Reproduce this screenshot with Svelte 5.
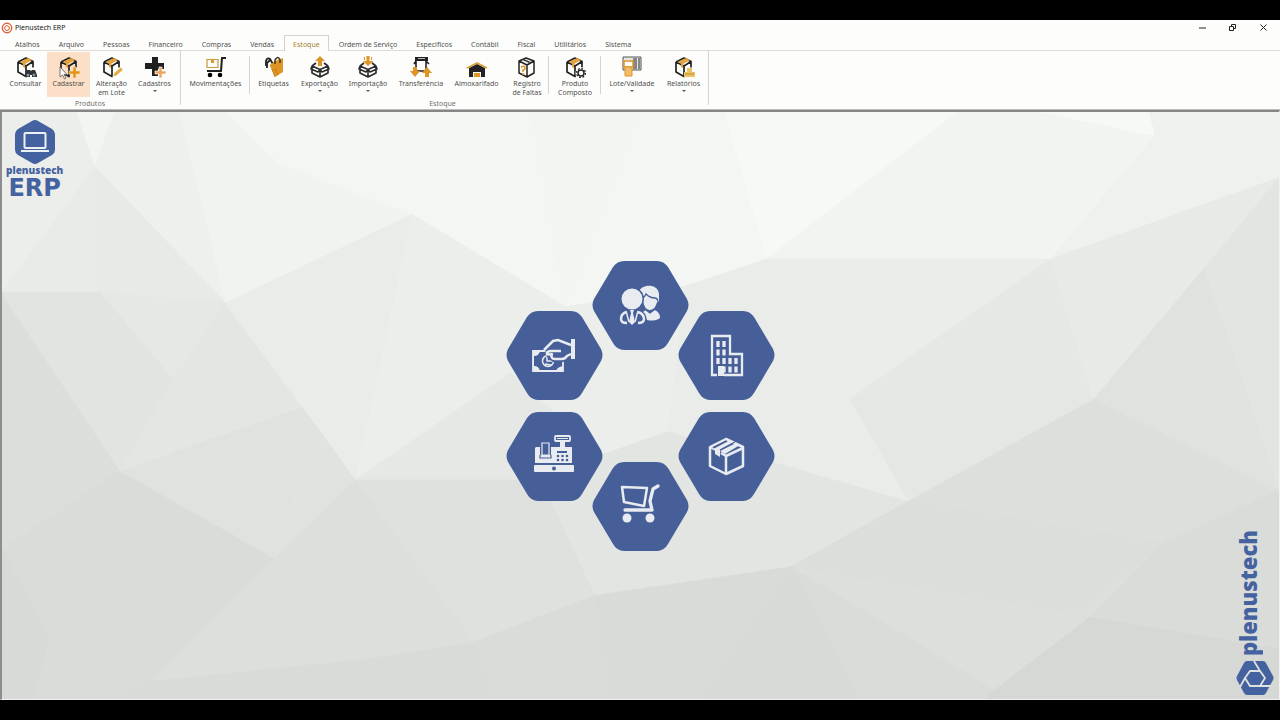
<script>
  const tabs = ['Atalhos', 'Arquivo', 'Pessoas', 'Financeiro', 'Compras', 'Vendas', 'Estoque', 'Ordem de Serviço', 'Específicos', 'Contábil', 'Fiscal', 'Utilitários', 'Sistema'];
  let active = $state('Estoque');

  const products = [
    { icon: 'search', lines: ['Consultar'] },
    { icon: 'add', lines: ['Cadastrar'], hot: true },
    { icon: 'edit', lines: ['Alteração', 'em Lote'] },
    { icon: 'plus', lines: ['Cadastros'], menu: true }
  ];
  const stock = [
    { icon: 'trolley', lines: ['Movimentações'], sep: true },
    { icon: 'tags', lines: ['Etiquetas'] },
    { icon: 'export', lines: ['Exportação'], menu: true },
    { icon: 'import', lines: ['Importação'], menu: true },
    { icon: 'transfer', lines: ['Transferência'] },
    { icon: 'warehouse', lines: ['Almoxarifado'] },
    { icon: 'missing', lines: ['Registro', 'de Faltas'], sep: true },
    { icon: 'gear', lines: ['Produto', 'Composto'], sep: true },
    { icon: 'barcode', lines: ['Lote/Validade'], menu: true },
    { icon: 'report', lines: ['Relatórios'], menu: true }
  ];
  const wheel = [
    { name: 'left', items: [['money', 'Financeiro'], ['register', 'Caixa']] },
    { name: 'middle', items: [['people', 'Pessoas'], ['cart', 'Compras']] },
    { name: 'right', items: [['building', 'Empresa'], ['box', 'Produtos']] }
  ];
  const facets = [
    ['0,0 75,0 93,55 98,181 0,181', '#ebeeeb'],
    ['93,55 98,181 0,181', '#e9ebe9'],
    ['75,0 113,0 93,55', '#f3f5f3'],
    ['113,0 178,0 224,192 93,55', '#eef0ee'],
    ['178,0 225,0 276,51 411,103 224,192', '#f1f3f1'],
    ['225,0 285,0 276,51', '#f4f6f4'],
    ['285,0 530,0 525,9 411,103 276,51', '#f4f6f3'],
    ['530,0 724,0 766,148 685,175 565,196 411,103', '#f4f6f3'],
    ['530,0 640,0 565,196', '#f3f5f2'],
    ['93,55 224,192 98,181', '#e8eae8'],
    ['98,181 224,192 301,297 118,361', '#e4e6e4'],
    ['98,181 224,192 171,268', '#e6e8e6'],
    ['0,181 98,181 171,268 118,361 4,190', '#e2e4e2'],
    ['0,181 4,190 118,361 0,440', '#dcdedc'],
    ['224,192 411,103 354,370', '#eaecea'],
    ['411,103 565,196 600,345 354,370', '#ebeeeb'],
    ['565,196 685,175 668,321 600,345 510,262', '#ebeeeb'],
    ['354,370 510,262 600,345 540,370', '#e6e8e6'],
    ['600,345 668,321 909,391 791,457 594,486 540,370', '#e3e5e2'],
    ['118,361 301,297 354,370 273,449', '#e0e2e0'],
    ['301,297 354,370 290,400', '#e1e3e1'],
    ['0,440 118,361 60,590 0,590', '#dadcd9'],
    ['118,361 273,449 151,572 110,590 60,590', '#dadcda'],
    ['0,440 48,530 30,590 0,590', '#d8dad7'],
    ['273,449 354,370 365,550 151,572', '#dddfdd'],
    ['354,370 540,370 594,486 473,533', '#dfe1df'],
    ['354,370 473,533 365,550', '#dddfdc'],
    ['151,572 365,550 473,533 594,486 791,457 900,590 110,590', '#d9dbd8'],
    ['473,533 594,486 610,590 490,590', '#dadcd9'],
    ['724,0 958,0 766,148', '#f7f9f6'],
    ['958,0 1150,0 1156,24 1051,148 766,148', '#f2f4f1'],
    ['1040,0 1150,0 1156,24', '#f7f9f7'],
    ['1150,0 1280,0 1280,66 1051,148 1156,24', '#eff1ee'],
    ['685,175 766,148 850,288 909,391 668,321', '#eaecea'],
    ['766,148 1051,148 850,288', '#ebedea'],
    ['1051,148 1094,289 850,288', '#e6e8e6'],
    ['850,288 1094,289 909,391', '#e5e7e4'],
    ['1051,148 1280,66 1205,157 1094,289', '#e8eae8'],
    ['1205,157 1280,66 1280,380', '#e3e5e3'],
    ['1205,157 1280,380 1094,289', '#e0e2e0'],
    ['791,457 909,391 1094,289 1164,433 1090,508 995,581', '#dddfdc'],
    ['909,391 1164,433 1080,505 791,457', '#dcdedb'],
    ['1094,289 1280,380 1164,433', '#dddfdd'],
    ['1164,433 1280,380 1280,590 1090,508', '#dadcd9'],
    ['791,457 995,581 1000,590 860,590', '#dadcd9'],
    ['791,457 860,590 700,590', '#d8dad7'],
    ['1090,508 1280,540 1280,590 985,590 995,581', '#d6d8d5']
  ];
</script>

{#snippet carton()}
  <path d="M3 6 11 2l7 3.500M3 6v10l8 4.500V10M3 6l8 4 7-4.500v6" fill="none" stroke="#222" stroke-width="1.700" stroke-linejoin="round" />
  <path d="m5 6 8-4 4 2-7 4v4l-2-1V7.500Z" fill="#e5a23a" />
{/snippet}

{#snippet openCarton()}
  <path d="M3 10v7l8 4 8-4v-7M11 13v8M3 10l8 3.500 8-3.500M3 10l4-3M19 10l-4-3M3 10l-1 3 7 3 2-2.500 2 2.500 7-3-1-3" fill="none" stroke="#2b2b2b" stroke-width="1.600" stroke-linejoin="round" />
{/snippet}

{#snippet toolIcon(name)}
  <svg class="tool-icon" viewBox="0 0 22 22" aria-hidden="true">
    {#if name === 'search'}
      {@render carton()}
      <path d="M12 14h3l1 1 1-1h3l2 5v2h-5v-2h-2v2h-5v-2Z" fill="#2d3338" />
      <circle cx="13" cy="19" r="1.500" fill="#8b9298" /><circle cx="19" cy="19" r="1.500" fill="#8b9298" />
    {:else if name === 'add'}
      {@render carton()}
      <path d="M15 11h3v4h4v3h-4v4h-3v-4h-4v-3h4Z" fill="#e29512" stroke="#fbe0c6" stroke-width=".6" />
    {:else if name === 'edit'}
      {@render carton()}
      <path d="m12 21 1-4 7-6 2 3-7 6Z" fill="#e6a93f" stroke="#fdfefb" stroke-width=".7" />
    {:else if name === 'plus'}
      <path d="M8 1h6v6h6v6h-6v7H8v-7H1V7h7Z" fill="#1f1f1f" />
      <path d="M15 11h3v4h4v3h-4v4h-3v-4h-4v-3h4Z" fill="#eda45e" stroke="#fdfefb" stroke-width=".7" />
    {:else if name === 'trolley'}
      <path d="M2 3.500h11v8H2Z" fill="#fdfefb" stroke="#c89a3c" stroke-width="1.200" />
      <path d="M6 3h3v4H6Z" fill="#e0982a" />
      <path d="M21 2h-4l-1 13H2" fill="none" stroke="#1f1f1f" stroke-width="2" />
      <circle cx="5" cy="19" r="2.300" /><circle cx="15" cy="19" r="2.300" />
    {:else if name === 'tags'}
      <path d="M3 10V5q1-4 4-2l4 7M4 12V7l3-3" fill="none" stroke="#222" stroke-width="1.800" />
      <path d="m7 9 5-4 8-3v14l-8 5-5-11Z" fill="#df9423" />
      <path d="M12 8V4q3-5 5 0v3" fill="none" stroke="#3a3328" stroke-width="1.500" />
      <path d="m9 13 3 8M12 12l3 7" stroke="#b66f12" stroke-width=".7" />
    {:else if name === 'export'}
      {@render openCarton()}
      <path d="m11 0 5 5h-3v5H9V5H6Z" fill="#df9423" />
    {:else if name === 'import'}
      {@render openCarton()}
      <path d="M9.500 0h3v5h4L11 10 6 5h3.500ZM7 1h1v3H7ZM14 1h1v3h-1Z" fill="#df9423" />
    {:else if name === 'transfer'}
      <path d="M6 5v10h10V5M6 5 4 8M16 5l3 3" fill="none" stroke="#222" stroke-width="1.600" />
      <path d="M5 1h13v4H5Z" fill="#222" />
      <path d="M8 2h7v1H8Z" fill="#bbb" />
      <path d="M3 11h4v4h3l-5 6-5-6h3ZM15 21v-4h-3l5-6 5 6h-3v4Z" fill="#df9423" />
    {:else if name === 'warehouse'}
      <path d="m3 12 8-4 8 4v9H3Z" fill="#222" />
      <path d="m1 12 10-5 10 5" fill="none" stroke="#d9a03a" stroke-width="1.700" />
      <path d="M7 16h8v5H7Z" fill="#f8f8f6" /><path d="M8 17h6v4H8Z" fill="#df9423" />
    {:else if name === 'missing'}
      <path d="m3 5 7-3 8 3v12l-7 4-8-4ZM3 5l8 4 7-4M11 9v12" fill="none" stroke="#222" stroke-width="1.500" stroke-linejoin="round" />
      <path d="m6 4 7 3 2-1-7-3Z" fill="#444" />
      <path d="M5 11q4-2 4 1 0 2-2 2v2M7 17v2" fill="none" stroke="#df9423" stroke-width="1.500" />
    {:else if name === 'gear'}
      {@render carton()}
      <circle cx="17" cy="17" r="5.500" fill="#fdfefb" />
      <circle cx="17" cy="17" r="3" fill="none" stroke="#222" stroke-width="1.500" />
      <circle cx="17" cy="17" r="4.500" fill="none" stroke="#222" stroke-width="1.200" stroke-dasharray="1.800 1.700" />
    {:else if name === 'barcode'}
      <path d="M2 1h18v13H2Z" fill="#e8e8e8" stroke="#555" />
      <path d="M13 2v11M15 2v11M18 2v11" stroke="#444" stroke-width="1.200" />
      <path d="M3 5h9v6H3Z" fill="#fff" stroke="#df9423" stroke-width="1.500" />
      <path d="M4 11h7v9H4Z" fill="#f2bd69" stroke="#df9423" />
    {:else if name === 'report'}
      {@render carton()}
      <path d="M14 12h5v4h3v5H11v-5h3Z" fill="#e8c264" />
      <path d="M12 18h9" stroke="#c3922d" />
    {/if}
  </svg>
{/snippet}

{#snippet ribbonGroup(title, items, kind)}
  <section class="group {kind}" aria-label={title}>
    <div class="tools">
      {#each items as t}
        <button class="tool" class:hot={t.hot} class:sep={t.sep}>
          {@render toolIcon(t.icon)}
          <span class="label">{#each t.lines as line}<span>{line}</span>{/each}</span>
          {#if t.menu}<i class="caret"></i>{/if}
          {#if t.hot}
            <svg class="cursor" viewBox="0 0 9 14" aria-hidden="true">
              <path d="M1 1v10l2.500-2 2 4 1.500-1-2-3.500H8Z" fill="#fff" stroke="#555" stroke-width=".8" />
            </svg>
          {/if}
        </button>
      {/each}
    </div>
    <p>{title}</p>
  </section>
{/snippet}

{#snippet wheelIcon(name)}
  <svg class="hex-art" viewBox="0 0 97 89" aria-hidden="true">
    <path class="tile" d="M32 0H65Q72 0 76 6L95 38Q98 44 95 50L76 82Q72 89 65 89H32Q25 89 21 82L2 50Q-1 44 2 38L21 6Q25 0 32 0Z" />
    {#if name === 'people'}
      <path class="fill" d="M47 31c2-8 19-9 20 2v7l-2 1c-1 5-4 8-7 8-4 0-6-4-7-9Z" />
      <path class="cut" stroke-width="1.300" d="M50 37q3-1 4-4 4 4 9 4 2 0 3 3" />
      <path class="fill" d="m54 49 4 3 4-3c4 1 6 4 6 8-4 3-9 3-13 2-1-5-2-7-4-8Z" />
      <path class="cut" stroke-width="1.300" d="m54 49 4 3 4-3" />
      <circle class="tile" cx="40" cy="38" r="12" />
      <circle class="fill" cx="40" cy="38" r="10.500" />
      <path class="line" stroke-width="2.500" d="M34 51q-5 2-5 7 0 4 6 4M46 51q6 2 6 7 0 4-6 4" />
      <path class="line" stroke-width="1.500" d="m34 50 3 11M46 50l-3 11" />
      <path class="fill" d="M38 49h4l-1 3 2 9-3 3-3-3 2-9Z" />
    {:else if name === 'money'}
      <path class="line" stroke-width="1.800" d="M27 40h30v20H27Z" />
      <path class="fill" d="M27 40h7q-1 5-6 5v10q5 0 6 5h-7ZM57 60h-7q1-4 7-5Z" />
      <circle class="line" stroke-width="1.500" cx="42" cy="50" r="5.500" />
      <path class="line" stroke-width="1.500" d="M41 45v5h7M39 53l6 1" />
      <path class="tile" d="m39 39 12-11 14 5v13l-8 5H47l-6-5Z" />
      <path class="line" stroke-width="2.500" d="m38 39 9-9 5-1 13 5M55 40H44q-4 1-3 3l6 1M46 42q-2 6 3 6h7q3 0 5-3l4-2" />
      <path class="fill" d="M65 28h4v20h-4Z" />
    {:else if name === 'building'}
      <path class="line" stroke-width="2.300" d="M39 64h-5V25h18v18h12v21H46" />
      <path class="line" stroke-width="3.300" stroke-dasharray="6 2.500" d="M40 30v24M46 30v32" />
      <path class="line" stroke-width="3.300" stroke-dasharray="6 2.500" d="M52 47v15M58 47v15" />
      <path class="fill" d="M40 55h6v10h-6Z" />
    {:else if name === 'register'}
      <rect class="fill" x="28" y="53" width="40" height="7" rx="1" />
      <path class="fill" d="M30 35h36v16H29V36Z" />
      <rect class="line" x="49" y="24" width="15" height="5" rx="1" stroke-width="1.800" />
      <path class="fill" d="M51 26h11v1H51ZM54 29h5v7h-5Z" />
      <path class="tile" d="M34 29h11v14H34Z" />
      <path class="line" stroke-width="1.200" d="M36 31h7v12h-7Z" />
      <path class="tile" d="M51 39h10v2H51Z" />
      <g class="tile"><circle cx="52" cy="44" r="1.300" /><circle cx="56.500" cy="44" r="1.300" /><circle cx="61" cy="44" r="1.300" /><circle cx="52" cy="48" r="1.300" /><circle cx="56.500" cy="48" r="1.300" /><circle cx="61" cy="48" r="1.300" /><circle cx="48" cy="56.500" r="2" /></g>
      <path class="cut" d="M34 43v3h11v-3" stroke-width="1.200" />
    {:else if name === 'cart'}
      <path class="line" stroke-width="2.500" stroke-linejoin="round" d="m30 25 25 1-3 18-20-4Z" />
      <path class="line" stroke-width="3.300" stroke-linecap="round" stroke-linejoin="round" d="m66 24-5 3-3 12 2 9H33" />
      <circle class="fill" cx="35" cy="56" r="4.500" /><circle class="fill" cx="58" cy="56" r="4.500" />
    {:else if name === 'box'}
      <path class="line" stroke-width="2.500" stroke-linejoin="round" d="m48 27 17 8v19l-17 8-16-8V35ZM32 35l6 3M43 41l5 3 17-8M48 44v18" />
      <path class="fill" d="m37 36 15-8 4 2-14 8v7l-5-3ZM42 39l16-8 4 2-15 9Z" />
      <path class="cut" d="m42 38 15-8M35 36l14-7" stroke-width="1.200" />
    {/if}
  </svg>
{/snippet}

<div class="screen">
  <header>
    <div class="titlebar">
      <svg class="brand" viewBox="0 0 12 12" aria-hidden="true">
        <circle cx="6" cy="6" r="4.700" fill="none" stroke="#d8603a" stroke-width="1.400" />
        <path d="M6 3.500 8.200 5v2.500L6 8.700 3.800 7.500V5Z" fill="none" stroke="#d8603a" />
      </svg>
      <h1>Plenustech ERP</h1>
      <div class="controls">
        <button aria-label="Minimizar"><svg viewBox="0 0 9 9"><path d="M1 5h7" /></svg></button>
        <button aria-label="Restaurar"><svg viewBox="0 0 9 9"><path d="M1.500 3.500h4v4h-4ZM3.500 3V1.500h4v4H6" /></svg></button>
        <button aria-label="Fechar"><svg viewBox="0 0 9 9"><path d="m1.500 1.500 6 6m0-6-6 6" /></svg></button>
      </div>
    </div>
    <nav>
      {#each tabs as tab}
        <button class:active={tab === active} onclick={() => (active = tab)}>{tab}</button>
      {/each}
    </nav>
    <div class="ribbon">
      {@render ribbonGroup('Produtos', products, 'products')}
      {@render ribbonGroup('Estoque', stock, 'stock')}
    </div>
  </header>

  <main>
    <svg class="backdrop" viewBox="0 0 1280 590" preserveAspectRatio="none" aria-hidden="true">
      {#each facets as [points, color]}
        <polygon {points} fill={color} stroke={color} stroke-width=".6" />
      {/each}
    </svg>

    <div class="logo">
      <svg viewBox="0 0 40 44" aria-hidden="true">
        <path d="M17 1q3-2 6 0l14 8q3 2 3 5v16q0 3-3 5l-14 8q-3 2-6 0L3 35q-3-2-3-5V14q0-3 3-5Z" fill="#4562a0" />
        <rect x="9.500" y="13" width="21" height="15" rx="1" fill="none" stroke="#eef1f2" stroke-width="2" />
        <path d="M6 30h28v2H6Z" fill="#eef1f2" />
      </svg>
      <span class="name">plenustech</span>
      <strong>ERP</strong>
    </div>

    <div class="wheel">
      {#each wheel as column}
        <div class="column {column.name}">
          {#each column.items as [icon, label]}
            <button class="hex" aria-label={label}>{@render wheelIcon(icon)}</button>
          {/each}
        </div>
      {/each}
    </div>

    <div class="signature">
      <span>plenustech</span>
      <svg viewBox="0 0 38 34" aria-hidden="true">
        <path d="M11 0h16q2 0 3 2l7 13q1 2 0 4l-7 13q-1 2-3 2H11q-2 0-3-2L1 19q-1-2 0-4L8 2q1-2 3-2Z" fill="#4562a0" />
        <path d="M14 10h10l5 7-5 8H14l-5-8ZM18 0l6 10M29 17l-5 8h11M9 17 4 26" fill="none" stroke="#dfe2e0" stroke-width="1.800" />
      </svg>
    </div>
  </main>
</div>

<style>
  :global(body) { margin: 0; background: #000; }
  .screen {
    box-sizing: border-box;
    min-height: 100vh;
    padding: 20px 0;
    display: flex;
    flex-direction: column;
    background: #000;
    color: #505050;
    font: 7px/9px "Noto Sans", "Open Sans", sans-serif;
  }
  button { margin: 0; padding: 0; border: 0; background: none; color: inherit; font: inherit; }
  header { background: #fdfefb; }
  .titlebar { display: flex; align-items: center; height: 15px; padding: 0 1px; }
  .brand { width: 12px; height: 12px; }
  h1 { margin: 0 0 0 2px; font-size: 7px; font-weight: 400; color: #222; }
  .controls { display: flex; margin-left: auto; }
  .controls button { display: flex; align-items: center; justify-content: center; width: 30px; height: 14px; }
  .controls button:last-child { width: 32px; }
  .controls svg { width: 9px; height: 9px; fill: none; stroke: #222; }
  nav { display: flex; gap: 1px; height: 15px; padding-left: 6px; border-bottom: 1px solid #dcdddb; }
  nav button { height: 16px; padding: 2px 8px 0; border: 1px solid transparent; border-bottom: 0; white-space: nowrap; }
  nav .active { border-color: #d2d3d1; background: #fdfefb; color: #a5812f; }
  .ribbon { display: flex; height: 58px; border-bottom: 1px solid #bbbcba; }
  .group { display: flex; flex-direction: column; padding: 1px 0 0; border-right: 1px solid #d4d5d3; margin-bottom: 4px; }
  .products { padding-left: 4px; padding-right: 4px; }
  .stock { padding-right: 4px; }
  .tools { display: grid; height: 45px; }
  .products .tools { grid-template-columns: repeat(4, 43px); }
  .stock .tools { grid-template-columns: 69px 47px 45px 52px 54px 57px 44px 52px 62px 41px; }
  .group p { margin: 2px 0 0; text-align: center; color: #707070; }
  .tool { position: relative; display: flex; flex-direction: column; align-items: center; padding-top: 4px; white-space: nowrap; }
  .hot { background: #fbdfc6; }
  .sep::after { content: ""; position: absolute; right: 0; top: 4px; bottom: 3px; width: 1px; background: #d4d5d3; }
  .tool-icon { width: 22px; height: 22px; flex: none; }
  .label { display: flex; flex-direction: column; align-items: center; margin-top: 1px; }
  .caret { margin-top: 2px; border: 2px solid transparent; border-top-color: #555; border-bottom: 0; }
  .cursor { position: absolute; left: 12px; top: 14px; width: 9px; height: 14px; }

  main {
    position: relative;
    flex: 1;
    display: grid;
    place-items: center;
    border: solid;
    border-width: 2px 1px 1px 2px;
    border-color: #858685 #f1f2f0 #f1f2f0 #8c8d8c;
    background: #e4e6e4;
  }
  .backdrop { position: absolute; inset: 0; width: 100%; height: 100%; }
  .logo, .wheel, .signature { position: relative; grid-area: 1 / 1; }
  .logo { place-self: start; display: flex; flex-direction: column; align-items: center; padding: 8px 0 0 4px; color: #4562a0; }
  .logo svg { width: 40px; height: 44px; }
  .name { font: 800 10px/12px "Open Sans", sans-serif; }
  .logo strong { margin-top: 2px; font: 700 24px/20px "DejaVu Sans", sans-serif; }
  .wheel { display: flex; align-items: center; }
  .column { display: grid; gap: 12px; }
  .middle { gap: 112px; margin: 0 -11px; }
  .hex { display: block; width: 97px; height: 89px; }
  .hex-art { display: block; width: 97px; height: 89px; }
  .tile { fill: #465f99; }
  .fill { fill: #e8ebef; }
  .line { fill: none; stroke: #e8ebef; }
  .cut { fill: none; stroke: #465f99; }
  .signature { place-self: end; display: flex; flex-direction: column; align-items: center; gap: 5px; padding: 0 4px 4px 0; color: #4562a0; }
  .signature span { margin-right: 14px; writing-mode: vertical-rl; transform: rotate(180deg); font: 800 22px/26px "Open Sans", sans-serif; }
  .signature svg { width: 38px; height: 34px; }
</style>
